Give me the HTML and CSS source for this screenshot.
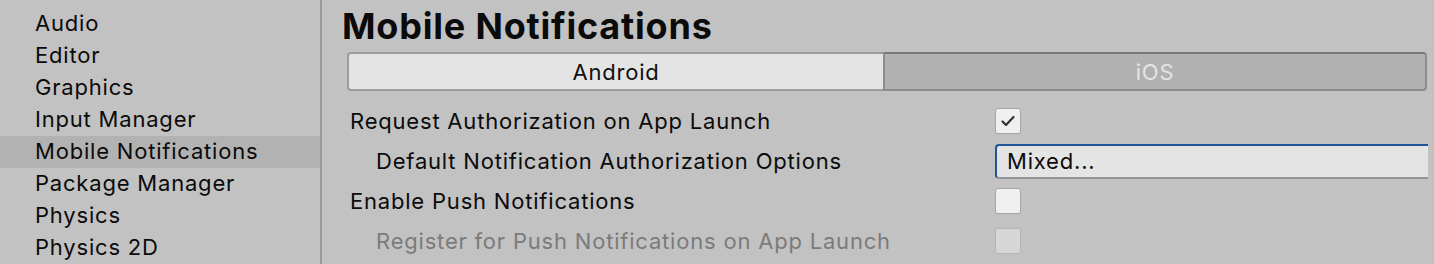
FILE: index.html
```html
<!DOCTYPE html>
<html lang="en">
<head>
  <meta charset="UTF-8">
  <title>Project Settings - Mobile Notifications</title>
  <link rel="stylesheet" href="styles.css">
</head>
<body>
  <div class="window">
    <div class="sidebar">
      <div class="side-item">Audio</div>
      <div class="side-item">Editor</div>
      <div class="side-item">Graphics</div>
      <div class="side-item">Input Manager</div>
      <div class="side-item active">Mobile Notifications</div>
      <div class="side-item">Package Manager</div>
      <div class="side-item">Physics</div>
      <div class="side-item">Physics 2D</div>
    </div>
    <div class="main">
      <h1>Mobile Notifications</h1>
      <div class="tabs">
        <div class="tab selected">Android</div>
        <div class="tab">iOS</div>
      </div>
      <div class="fields">
        <div class="label">Request Authorization on App Launch</div>
        <div class="control">
          <span class="checkbox">
            <svg width="18" height="18" viewBox="0 0 18 18"><path d="M3.5 9.5 L7 13 L14.5 5" fill="none" stroke="#333" stroke-width="2.2" stroke-linecap="round" stroke-linejoin="round"/></svg>
          </span>
        </div>
        <div class="label sub">Default Notification Authorization Options</div>
        <div class="control">
          <div class="dropdown">Mixed...</div>
        </div>
        <div class="label">Enable Push Notifications</div>
        <div class="control"><span class="checkbox"></span></div>
        <div class="label sub disabled">Register for Push Notifications on App Launch</div>
        <div class="control"><span class="checkbox off"></span></div>
      </div>
    </div>
  </div>
</body>
</html>
```

FILE: styles.css
```css
body {
  margin: 0;
  background: #c2c2c2;
  font-family: Inter, "Noto Sans", sans-serif;
  color: #0b0b0b;
  letter-spacing: 0.8px;
  overflow: hidden;
}
.window {
  display: flex;
  height: 264px;
}
.sidebar {
  width: 320px;
  border-right: 2px solid #9a9a9a;
  padding-top: 8px;
  box-sizing: content-box;
}
.side-item {
  height: 32px;
  line-height: 30px;
  padding-left: 35px;
  font-size: 22px;
}
.side-item.active {
  background: #b2b2b2;
}

.main {
  flex: 1;
  padding: 0 6px 0 25px;
}
h1 {
  margin: 0 0 0 -5px;
  height: 52px;
  line-height: 52px;
  font-size: 36px;
  font-weight: 700;
}
.tabs {
  display: flex;
  height: 39px;
  margin-right: 1px;
}
.tab {
  flex: 1;
  display: flex;
  align-items: center;
  justify-content: center;
  font-size: 22px;
  box-sizing: border-box;
  background: #b1b1b1;
  color: #e4e4e4;
  border: 2px solid #8c8c8c;
  border-top-color: #777;
  border-radius: 0 4px 4px 0;
}
.tab.selected {
  flex: 0 0 536px;
  background: #e4e4e4;
  color: #101010;
  border: 2px solid #9c9c9c;
  border-right: none;
  border-radius: 4px 0 0 4px;
}

.fields {
  display: grid;
  grid-template-columns: 645px 1fr;
  grid-auto-rows: 40px;
  margin-top: 10px;
  margin-left: 3px;
}
.label {
  display: flex;
  align-items: center;
  font-size: 22px;
}
.label.sub {
  padding-left: 26px;
}
.label.disabled {
  color: #7b7b7b;
}
.control {
  display: flex;
  align-items: center;
}
.checkbox {
  width: 26px;
  height: 26px;
  box-sizing: border-box;
  border: 1px solid #a5a5a5;
  border-radius: 3px;
  background: #f0f0f0;
  display: flex;
  align-items: center;
  justify-content: center;
}
.checkbox.off {
  background: #d6d6d6;
  border-color: #b5b5b5;
}
.dropdown {
  width: 100%;
  height: 35px;
  box-sizing: border-box;
  background: #e4e4e4;
  border: 2px solid #1f5595;
  border-bottom-color: #959595;
  border-right: none;
  border-radius: 4px 0 0 4px;
  padding-left: 10px;
  font-size: 22px;
  line-height: 31px;
}
```
